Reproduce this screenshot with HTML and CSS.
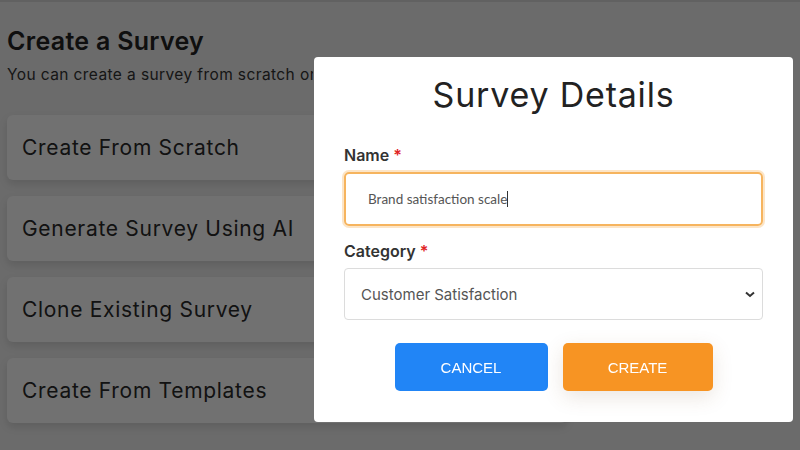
FILE: index.html
```html
<!DOCTYPE html>
<html lang="en">
<head>
    <meta charset="UTF-8">
    <meta name="viewport" content="width=device-width, initial-scale=1.0">
    <title>Create a Survey</title>
    <link rel="stylesheet" href="styles.css">
</head>
<body>
    <div class="page">
        <h1 class="page-title">Create a Survey</h1>
        <p class="page-sub">You can create a survey from scratch or use one of the options below</p>
        <div class="options">
            <div class="option">Create From Scratch</div>
            <div class="option">Generate Survey Using AI</div>
            <div class="option">Clone Existing Survey</div>
            <div class="option">Create From Templates</div>
        </div>
    </div>

    <div class="overlay">
        <div class="modal">
            <h2 class="modal-title">Survey Details</h2>
            <div class="field">
                <label class="label">Name <span class="req">*</span></label>
                <div class="input focused">Brand satisfaction scale<span class="caret"></span></div>
            </div>
            <div class="field">
                <label class="label">Category <span class="req">*</span></label>
                <div class="select">
                    <span>Customer Satisfaction</span>
                    <svg width="10" height="7" viewBox="0 0 10 7"><path d="M1 1.5 L5 5 L9 1.5" fill="none" stroke="#333" stroke-width="2"/></svg>
                </div>
            </div>
            <div class="actions">
                <button class="btn btn-cancel">CANCEL</button>
                <button class="btn btn-create">CREATE</button>
            </div>
        </div>
    </div>
</body>
</html>
```

FILE: styles.css
```css
body {
    margin: 0;
    height: 100vh;
    overflow: hidden;
    font-family: Inter, "Noto Sans", sans-serif;
    background-color: #efefef;
    border-top: 2px solid #d8d8d8;
    box-sizing: border-box;
}

.page {
    padding: 0 7px;
}

.page-title {
    margin: 24px 0 0;
    font-size: 25px;
    font-weight: 600;
    color: #222;
    letter-spacing: 0.3px;
}

/* the modal covers the rest of this line */
.page-sub {
    margin: 9px 0 0;
    width: 306px;
    overflow: hidden;
    font-size: 15.5px;
    color: #333;
    letter-spacing: 0.4px;
    white-space: nowrap;
}

.options {
    display: flex;
    flex-direction: column;
    gap: 16px;
    margin-top: 31px;
    width: 560px;
}

.option {
    background-color: #fdfdfd;
    border-radius: 6px;
    height: 65px;
    display: flex;
    align-items: center;
    padding-left: 15px;
    font-size: 21px;
    letter-spacing: 0.7px;
    color: #2a2a2a;
    box-shadow: 0 4px 8px rgba(0, 0, 0, 0.12);
}

.overlay {
    position: fixed;
    inset: 0;
    background-color: rgba(0, 0, 0, 0.553);
}

.modal {
    position: absolute;
    left: 314px;
    top: 57px;
    width: 479px;
    height: 365px;
    box-sizing: border-box;
    background-color: #fff;
    border-radius: 4px;
    padding: 0 30px;
}

.modal-title {
    margin: 18px 0 0;
    text-align: center;
    font-size: 34px;
    font-weight: 400;
    letter-spacing: 0.8px;
    color: #222;
    line-height: 40px;
}

.field {
    margin-top: 30px;
}

.field + .field {
    margin-top: 15px;
}

.label {
    display: block;
    font-size: 16px;
    font-weight: 600;
    color: #333;
    line-height: 20px;
    margin-bottom: 7px;
}

.req {
    color: #e02424;
}

.input {
    height: 54px;
    box-sizing: border-box;
    border: 2px solid #f6b45e;
    border-radius: 5px;
    box-shadow: 0 0 0 2px rgba(247, 180, 94, 0.35);
    display: flex;
    align-items: center;
    padding-left: 22px;
    font-family: Lato, sans-serif;
    font-size: 13.5px;
    color: #555;
}

.caret {
    display: inline-block;
    width: 1px;
    height: 16px;
    background-color: #333;
}

.select {
    height: 52px;
    box-sizing: border-box;
    border: 1px solid #dcdcdc;
    border-radius: 4px;
    display: flex;
    align-items: center;
    justify-content: space-between;
    padding: 0 7px 0 16px;
    font-size: 15px;
    color: #555;
}

.actions {
    display: flex;
    justify-content: center;
    gap: 15px;
    margin-top: 23px;
}

.btn {
    height: 48px;
    border: none;
    border-radius: 5px;
    color: #fff;
    font-family: "Liberation Sans", Arial, sans-serif;
    font-size: 15px;
    cursor: pointer;
}

.btn-cancel {
    width: 153px;
    background-color: #2185f6;
}

.btn-create {
    width: 150px;
    background-color: #f79423;
    box-shadow: 0 6px 20px rgba(120, 80, 40, 0.15);
}
```
